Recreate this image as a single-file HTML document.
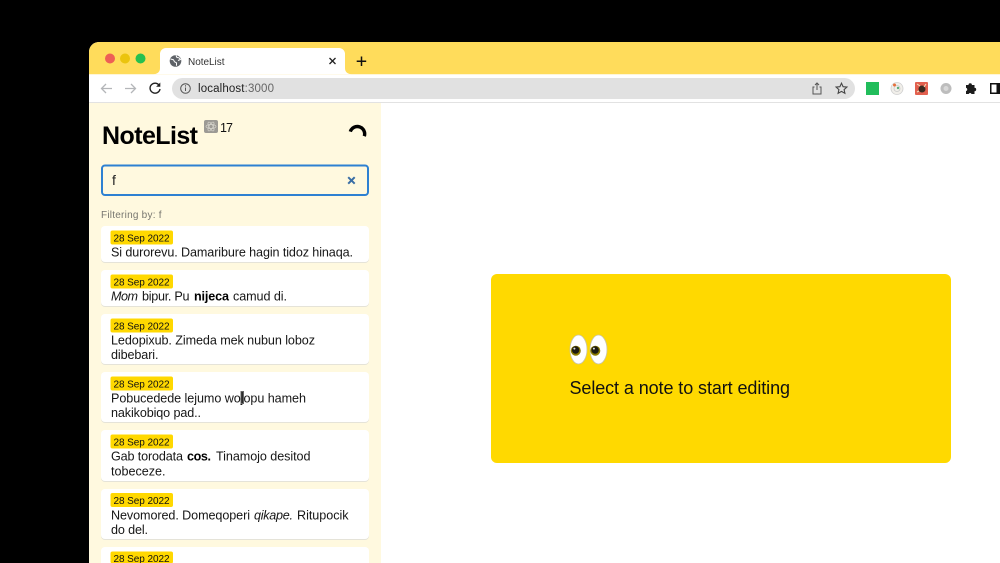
<!DOCTYPE html>
<html><head><meta charset="utf-8"><title>NoteList</title>
<style>
html,body{margin:0;padding:0;width:1000px;height:563px;overflow:hidden;background:#000}
svg{display:block;font-family:"Liberation Sans",sans-serif}
.n{font-size:12.6px;fill:#161616}
.d{font-size:10px;fill:#111}
.b{font-weight:bold;fill:#000}
.i{font-style:italic}
</style></head><body>
<svg width="1000" height="563" viewBox="0 0 1000 563" xmlns="http://www.w3.org/2000/svg">
<rect width="1000" height="563" fill="#000"/>
<!-- window -->
<path d="M89 563V52a10 10 0 0 1 10-10H1000V563Z" fill="#fff"/>
<path d="M89 74.300V52a10 10 0 0 1 10-10H1000V74.300Z" fill="#FFDC5B"/>
<rect x="89" y="102" width="911" height="1" fill="#E2E2E2"/>
<circle cx="110" cy="58.500" r="5" fill="#EE5F55"/>
<circle cx="125" cy="58.500" r="5" fill="#EBC40E"/>
<circle cx="140.500" cy="58.500" r="5" fill="#27C04F"/>
<!-- tab -->
<path d="M153 74.300c4 0 7-2 7-6V54a6 6 0 0 1 6-6H339a6 6 0 0 1 6 6V68.300c0 4 3 6 7 6Z" fill="#fff"/>
<circle cx="175.500" cy="61" r="5.800" fill="#5F6368"/>
<path d="M170.500 59l3 .8 1 2 2 1v3M176 55.500l1 2 2 .3 1.500 1.700-2.500 1" stroke="#fff" stroke-width="1" fill="none"/>
<text x="188" y="65" font-size="10" fill="#333" textLength="36.500">NoteList</text>
<path d="M329.500 58l6 6M335.500 58l-6 6" stroke="#222" stroke-width="1.300" fill="none"/>
<path d="M361.500 56.500v9.500M356.700 61.200h9.500" stroke="#111" stroke-width="1.500" fill="none"/>
<!-- nav -->
<path d="M112 88.500h-10.500M106 84l-4.500 4.500 4.500 4.500" stroke="#B4B6B9" stroke-width="1.300" fill="none"/>
<path d="M125 88.500h10.500M131 84l4.500 4.500-4.500 4.500" stroke="#B4B6B9" stroke-width="1.300" fill="none"/>
<path d="M159.300 85.500a5 5 0 1 0 .7 3.500" stroke="#222" stroke-width="1.400" fill="none"/>
<path d="M160.300 82.500v4.200h-4.200Z" fill="#222"/>
<rect x="172" y="78" width="683" height="21" rx="10.500" fill="#E1E1E1"/>
<circle cx="185.500" cy="88.500" r="4.800" fill="none" stroke="#555" stroke-width="1"/>
<path d="M185.500 87.500v3.500M185.500 85.300v1.200" stroke="#555" stroke-width="1"/>
<text x="198" y="92" font-size="11.500" fill="#222" textLength="76"><tspan>localhost</tspan><tspan fill="#666">:3000</tspan></text>
<path d="M814.500 87h-1.500v7h8v-7h-1.500M817 90v-7M815 85l2-2 2 2" stroke="#555" stroke-width="1" fill="none"/>
<path d="M841.500 83.200l1.600 3.500 3.800.4-2.800 2.500.8 3.700-3.400-1.900-3.400 1.900.8-3.700-2.800-2.500 3.800-.4Z" stroke="#444" stroke-width="1.100" fill="none"/>
<rect x="866" y="82" width="13" height="13" fill="#21BD5B"/>
<circle cx="897" cy="88.500" r="6" fill="#F1EFEA" stroke="#CFCFCF" stroke-width=".8"/>
<circle cx="897" cy="88.500" r="3" fill="none" stroke="#C9C9C9" stroke-width=".8"/>
<circle cx="894.500" cy="85" r="1.500" fill="#E8703A"/><circle cx="898" cy="88" r="1.200" fill="#5AAE7A"/>
<rect x="915" y="82" width="13" height="13" rx="1" fill="#E2604F"/>
<circle cx="922" cy="89" r="3.500" fill="#3A2A20"/><path d="M917 84l3 2M926 84l-2 3M917 92l2-1" stroke="#F1E4C0" stroke-width="1"/>
<circle cx="946" cy="88.500" r="5.500" fill="#BDBDBD"/><circle cx="946" cy="88.500" r="2.500" fill="#D8D8D8"/>
<path d="M966 85h2.500a1.700 1.700 0 0 1 3.400 0h2.600v2.800a1.700 1.700 0 0 1 0 3.400v2.800h-3a1.500 1.500 0 0 0-2.800 0h-2.700v-2.900a1.700 1.700 0 0 0 0-3.300Z" fill="#1C1C1C"/>
<path d="M990 83h10v11h-10Z" fill="#111"/><rect x="991.500" y="84.500" width="5" height="8" fill="#fff"/>
<!-- sidebar -->
<rect x="89" y="103" width="292" height="460" fill="#FFF9DF"/>
<text x="102" y="144" font-size="25" font-weight="bold" fill="#000" textLength="96">NoteList</text>
<rect x="204" y="120" width="14" height="13" rx="2" fill="#9C9A94"/>
<g fill="none" stroke="#D8D6CE" stroke-width=".7"><ellipse cx="211" cy="126.500" rx="5" ry="2"/><ellipse cx="211" cy="126.500" rx="5" ry="2" transform="rotate(60 211 126.500)"/><ellipse cx="211" cy="126.500" rx="5" ry="2" transform="rotate(120 211 126.500)"/></g>
<text x="220" y="132" font-size="12.500" fill="#111" textLength="13">17</text>
<path d="M350.300 131.600a7.300 7.300 0 0 1 14 4.600" fill="none" stroke="#000" stroke-width="3.400"/>
<rect x="102" y="165.500" width="266" height="29.500" rx="3" fill="#FFF9DF" stroke="#2E81D2" stroke-width="2"/>
<text x="112" y="185" font-size="14" fill="#222">f</text>
<path d="M348.200 177.200l6.500 6.500M354.700 177.200l-6.500 6.500" stroke="#3A6EA5" stroke-width="2" fill="none"/>
<text x="101" y="218" font-size="10" fill="#77766F" textLength="60.500">Filtering by: f</text>
<g fill="#E5E3D8">
<rect x="101" y="227" width="268" height="36" rx="4"/><rect x="101" y="271" width="268" height="36" rx="4"/><rect x="101" y="315" width="268" height="50" rx="4"/><rect x="101" y="373" width="268" height="50" rx="4"/><rect x="101" y="431" width="268" height="51" rx="4"/><rect x="101" y="490" width="268" height="50" rx="4"/>
</g>
<g fill="#fff">
<rect x="101" y="226" width="268" height="36" rx="4"/><rect x="101" y="270" width="268" height="36" rx="4"/><rect x="101" y="314" width="268" height="50" rx="4"/><rect x="101" y="372" width="268" height="50" rx="4"/><rect x="101" y="430" width="268" height="51" rx="4"/><rect x="101" y="489" width="268" height="50" rx="4"/><rect x="101" y="547" width="268" height="30" rx="4"/>
</g>
<g fill="#FFD800">
<rect x="110.500" y="230.500" width="62.500" height="14" rx="2"/><rect x="110.500" y="274.500" width="62.500" height="14" rx="2"/><rect x="110.500" y="318.500" width="62.500" height="14" rx="2"/><rect x="110.500" y="376.500" width="62.500" height="14" rx="2"/><rect x="110.500" y="434.500" width="62.500" height="14" rx="2"/><rect x="110.500" y="493" width="62.500" height="14" rx="2"/><rect x="110.500" y="551.500" width="62.500" height="12" rx="2"/>
</g>
<text class="d" x="113.500" y="241.300" textLength="56">28 Sep 2022</text>
<text class="d" x="113.500" y="285.300" textLength="56">28 Sep 2022</text>
<text class="d" x="113.500" y="329.300" textLength="56">28 Sep 2022</text>
<text class="d" x="113.500" y="387.300" textLength="56">28 Sep 2022</text>
<text class="d" x="113.500" y="445.300" textLength="56">28 Sep 2022</text>
<text class="d" x="113.500" y="504" textLength="56">28 Sep 2022</text>
<text class="d" x="113.500" y="562" textLength="56">28 Sep 2022</text>

<text class="n" x="111" y="256.500" textLength="242">Si durorevu. Damaribure hagin tidoz hinaqa.</text>

<text class="n i" x="111" y="300.500" textLength="27">Mom</text>
<text class="n" x="142" y="300.500" textLength="47.500">bipur. Pu</text>
<text class="n b" x="194" y="300.500" textLength="35">nijeca</text>
<text class="n" x="233" y="300.500" textLength="54">camud di.</text>

<text class="n" x="111" y="344.500" textLength="204">Ledopixub. Zimeda mek nubun loboz</text>
<text class="n" x="111" y="359" textLength="47.500">dibebari.</text>

<text class="n" x="111" y="402.500" textLength="195">Pobucedede lejumo wojopu hameh</text>
<text class="n" x="111" y="417" textLength="90">nakikobiqo pad..</text>
<rect x="240.500" y="391" width="3.500" height="13" fill="#666"/>
<rect x="241.500" y="392" width="1.200" height="11" fill="#111"/>

<text class="n" x="111" y="460.500" textLength="72">Gab torodata</text>
<text class="n b" x="187" y="460.500" textLength="24">cos.</text>
<text class="n" x="216" y="460.500" textLength="94.500">Tinamojo desitod</text>
<text class="n" x="111" y="475.500" textLength="54.500">tobeceze.</text>

<text class="n" x="111" y="519.500" textLength="139">Nevomored. Domeqoperi</text>
<text class="n i" x="254" y="519.500" textLength="39">qikape.</text>
<text class="n" x="297" y="519.500" textLength="51.500">Ritupocik</text>
<text class="n" x="111" y="534" textLength="37">do del.</text>
<!-- main -->
<rect x="491" y="274" width="460" height="189" rx="6" fill="#FFD900"/>
<g>
<ellipse cx="578.500" cy="349.500" rx="8.500" ry="14.500" fill="#fff" stroke="#C9C4A6" stroke-width=".8"/>
<ellipse cx="598.500" cy="349.500" rx="8.500" ry="14.500" fill="#fff" stroke="#C9C4A6" stroke-width=".8"/>
<circle cx="575.800" cy="350.700" r="5" fill="#8A7A00"/><circle cx="595.300" cy="350.700" r="5" fill="#8A7A00"/>
<circle cx="575.600" cy="350" r="3.700" fill="#1C1A12"/><circle cx="595.100" cy="350" r="3.700" fill="#1C1A12"/>
<circle cx="574.400" cy="348.600" r="1" fill="#ddd"/><circle cx="593.900" cy="348.600" r="1" fill="#ddd"/>
</g>
<text x="569.500" y="394" font-size="18" fill="#111" textLength="220.500">Select a note to start editing</text>
</svg>
</body></html>
